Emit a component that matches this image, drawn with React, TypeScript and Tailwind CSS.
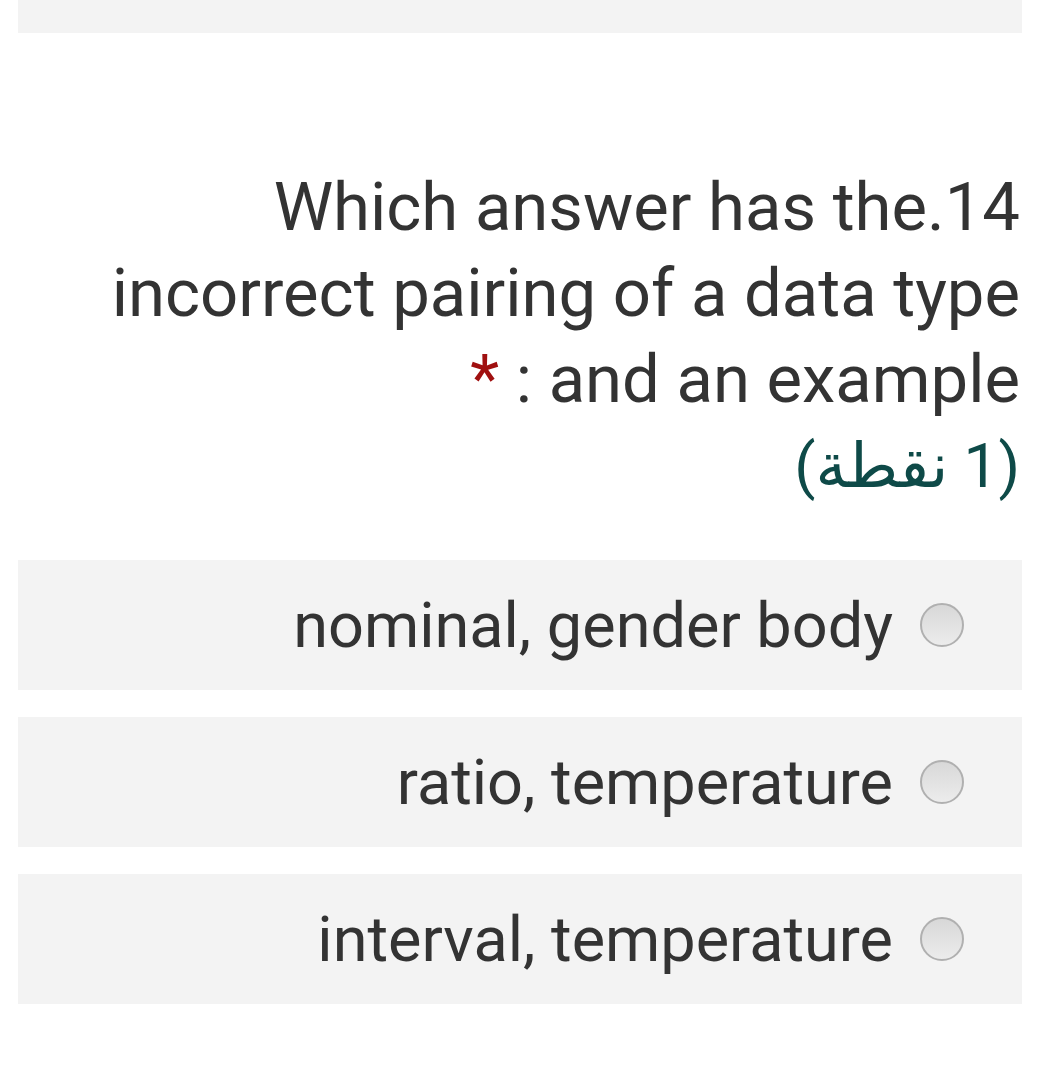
import React from "react";

const options = [
  "nominal, gender body",
  "ratio, temperature",
  "interval, temperature",
];

function Radio() {
  return (
    <div className="w-[44px] h-[44px] shrink-0 rounded-full border-[2px] border-[#b0b0b0] bg-gradient-to-b from-[#d8d8d8] to-[#ececec]" />
  );
}

export default function App() {
  return (
    <div
      className="w-[1059px] min-h-[1091px] bg-white pl-[18px] pr-[37px]"
      style={{ fontFamily: "Roboto, 'Noto Sans', 'DejaVu Sans', sans-serif" }}
    >
      <div className="h-[33px] bg-[#f3f3f3]" />
      <div dir="rtl" className="pt-[131px] pb-[50px] text-right">
        <div className="text-[67px] leading-[86px] text-[#333333] pr-[2px]">
          14.Which answer has the incorrect pairing of a data type and an example :{" "}
          <span className="text-[#a01010]">*</span>
        </div>
        <div className="text-[62px] leading-[88px] text-[#0e4a48] pr-[2px]">(1 نقطة)</div>
      </div>
      <div className="flex flex-col gap-[27px]">
        {options.map((o) => (
          <div
            key={o}
            dir="rtl"
            className="h-[130px] bg-[#f3f3f3] flex items-center pr-[58px] gap-[27px]"
          >
            <Radio />
            <span className="text-[63px] text-[#333333] leading-none">{o}</span>
          </div>
        ))}
      </div>
    </div>
  );
}
